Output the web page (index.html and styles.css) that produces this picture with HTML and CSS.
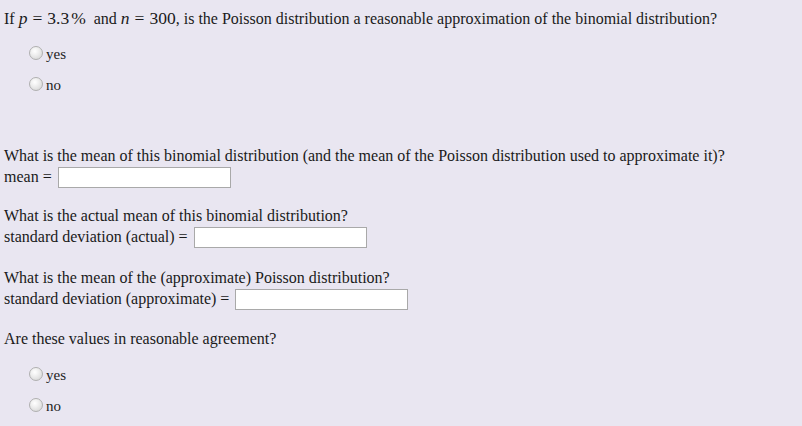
FILE: index.html
```html
<!DOCTYPE html>
<html>
<head>
<meta charset="utf-8">
<link rel="stylesheet" href="styles.css">
</head>
<body>
<div class="page">
  <p class="q q1">If <span class="math"><i>p</i><span class="op">=</span>3.3<span class="pct">%</span></span><span class="gap"></span>and <span class="math"><i>n</i><span class="op">=</span>300</span>, is the Poisson distribution a reasonable approximation of the binomial distribution?</p>
  <div class="choices first">
    <label class="choice"><span class="radio"></span>yes</label>
    <label class="choice"><span class="radio"></span>no</label>
  </div>

  <div class="block b1">
    <p class="q">What is the mean of this binomial distribution (and the mean of the Poisson distribution used to approximate it)?</p>
    <div class="field">mean = <span class="box"></span></div>
  </div>

  <div class="block b2">
    <p class="q">What is the actual mean of this binomial distribution?</p>
    <div class="field">standard deviation (actual) = <span class="box"></span></div>
  </div>

  <div class="block b3">
    <p class="q">What is the mean of the (approximate) Poisson distribution?</p>
    <div class="field">standard deviation (approximate) = <span class="box"></span></div>
  </div>

  <p class="q q5">Are these values in reasonable agreement?</p>
  <div class="choices">
    <label class="choice"><span class="radio"></span>yes</label>
    <label class="choice"><span class="radio"></span>no</label>
  </div>
</div>
</body>
</html>
```
FILE: styles.css
```css
html, body {
  margin: 0;
  padding: 0;
  background: #e9e6f1;
}
body {
  width: 802px;
  height: 426px;
  overflow: hidden;
  font-family: "Liberation Serif", "Times New Roman", serif;
  font-size: 16px;
  color: #1a1a1a;
}
.page {
  padding: 8px 0 0 4px;
  display: flex;
  flex-direction: column;
}
.q {
  margin: 0;
  line-height: 20px;
  height: 20px;
  white-space: nowrap;
}
.math {
  font-size: 17.5px;
}
.math i {
  font-style: italic;
}
.op {
  padding: 0 5px;
}
.pct {
  padding-left: 2px;
}
.gap {
  display: inline-block;
  width: 8px;
}
.choices {
  display: flex;
  flex-direction: column;
  gap: 11px;
  padding-left: 25px;
  margin-top: 16px;
}
.choice {
  display: flex;
  align-items: center;
  height: 20px;
  line-height: 20px;
  font-size: 15px;
  color: #222;
}
.radio {
  width: 12px;
  height: 12px;
  border-radius: 50%;
  border: 1px solid #b0b0b0;
  background: radial-gradient(circle at 40% 35%, #ffffff 0%, #f0f0f0 35%, #d0d0d0 100%);
  margin-right: 3px;
  margin-top: -3px;
  flex: none;
}
.block {
  display: flex;
  flex-direction: column;
}
.b1 {
  margin-top: 51px;
}
.b2 {
  margin-top: 18px;
}
.b3 {
  margin-top: 20px;
}
.field {
  display: flex;
  align-items: center;
  height: 22px;
  line-height: 22px;
  white-space: pre;
}
.box {
  display: inline-block;
  width: 171px;
  height: 19px;
  border: 1px solid #a9a9a9;
  background: #fff;
  margin-left: 2px;
}
.q5 {
  margin-top: 19px;
}
```
